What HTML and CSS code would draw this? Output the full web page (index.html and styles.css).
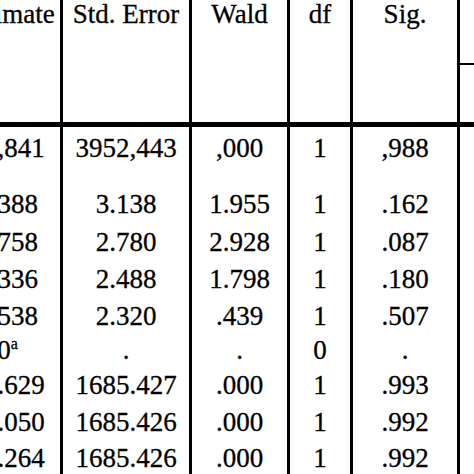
FILE: index.html
```html
<!DOCTYPE html>
<html>
<head>
<meta charset="utf-8">
<link rel="stylesheet" href="styles.css">
</head>
<body>
<table class="stats">
  <colgroup>
    <col class="c-est">
    <col class="c-se">
    <col class="c-wald">
    <col class="c-df">
    <col class="c-sig">
    <col class="c-ci">
    <col class="c-ci">
  </colgroup>
  <thead>
    <tr class="h-top">
      <th rowspan="2" class="hd">Estimate</th>
      <th rowspan="2" class="hd">Std. Error</th>
      <th rowspan="2" class="hd">Wald</th>
      <th rowspan="2" class="hd">df</th>
      <th rowspan="2" class="hd">Sig.</th>
      <th colspan="2" class="hd group">95% Confidence Interval</th>
    </tr>
    <tr class="h-sub">
      <th class="hd sub">Lower Bound</th>
      <th class="hd sub">Upper Bound</th>
    </tr>
  </thead>
  <tbody>
    <tr class="r1"><td>19,841</td><td>3952,443</td><td>,000</td><td>1</td><td>,988</td><td>-7726,810</td><td>7766,492</td></tr>
    <tr class="r2"><td>4.388</td><td>3.138</td><td>1.955</td><td>1</td><td>.162</td><td>-1.762</td><td>10.538</td></tr>
    <tr class="r3"><td>4.758</td><td>2.780</td><td>2.928</td><td>1</td><td>.087</td><td>-.692</td><td>10.207</td></tr>
    <tr class="r4"><td>3.336</td><td>2.488</td><td>1.798</td><td>1</td><td>.180</td><td>-1.540</td><td>8.212</td></tr>
    <tr class="r5"><td>1.538</td><td>2.320</td><td>.439</td><td>1</td><td>.507</td><td>-3.009</td><td>6.085</td></tr>
    <tr class="r6"><td>0<sup>a</sup></td><td>.</td><td>.</td><td>0</td><td>.</td><td>.</td><td>.</td></tr>
    <tr class="r7"><td>21.629</td><td>1685.427</td><td>.000</td><td>1</td><td>.993</td><td>-3281.730</td><td>3324.988</td></tr>
    <tr class="r8"><td>21.050</td><td>1685.426</td><td>.000</td><td>1</td><td>.992</td><td>-3282.307</td><td>3324.407</td></tr>
    <tr class="r9"><td>21.264</td><td>1685.426</td><td>.000</td><td>1</td><td>.992</td><td>-3282.093</td><td>3324.621</td></tr>
  </tbody>
</table>
</body>
</html>
```

FILE: styles.css
```css
html, body {
  margin: 0;
  padding: 0;
  background: #ffffff;
  overflow: hidden;
  width: 474px;
  height: 474px;
}

.stats {
  margin-left: -45px;
  border-collapse: separate;
  border-spacing: 0;
  table-layout: fixed;
  width: 905px;
  font-family: "Liberation Serif", "Times New Roman", serif;
  font-size: 27px;
  color: #000;
  -webkit-text-stroke: 0.3px #000;
}

.c-est { width: 108px; }
.c-se { width: 129px; }
.c-wald { width: 98px; }
.c-df { width: 63px; }
.c-sig { width: 107px; }
.c-ci { width: 200px; }

.stats th,
.stats td {
  box-sizing: border-box;
  padding: 0;
  line-height: 30px;
  text-align: center;
  vertical-align: top;
  font-weight: normal;
  white-space: nowrap;
  overflow: hidden;
  border-right: 3px solid #000;
}

.stats th.hd {
  border-bottom: 5px solid #000;
  line-height: 28px;
}

.stats th.group {
  border-bottom: 2px solid #000;
}

.h-top { height: 65px; }
.h-sub { height: 62px; }

.r1 { height: 62px; }
.r1 td { padding-top: 6px; }
.r2 { height: 38px; }
.r3 { height: 37px; }
.r4 { height: 37px; }
.r5 { height: 34px; }
.r6 { height: 35px; }
.r7 { height: 37px; }
.r8 { height: 36px; }
.r9 { height: 40px; }

.stats sup {
  font-size: 16px;
  line-height: 0;
  vertical-align: 10px;
}
```
